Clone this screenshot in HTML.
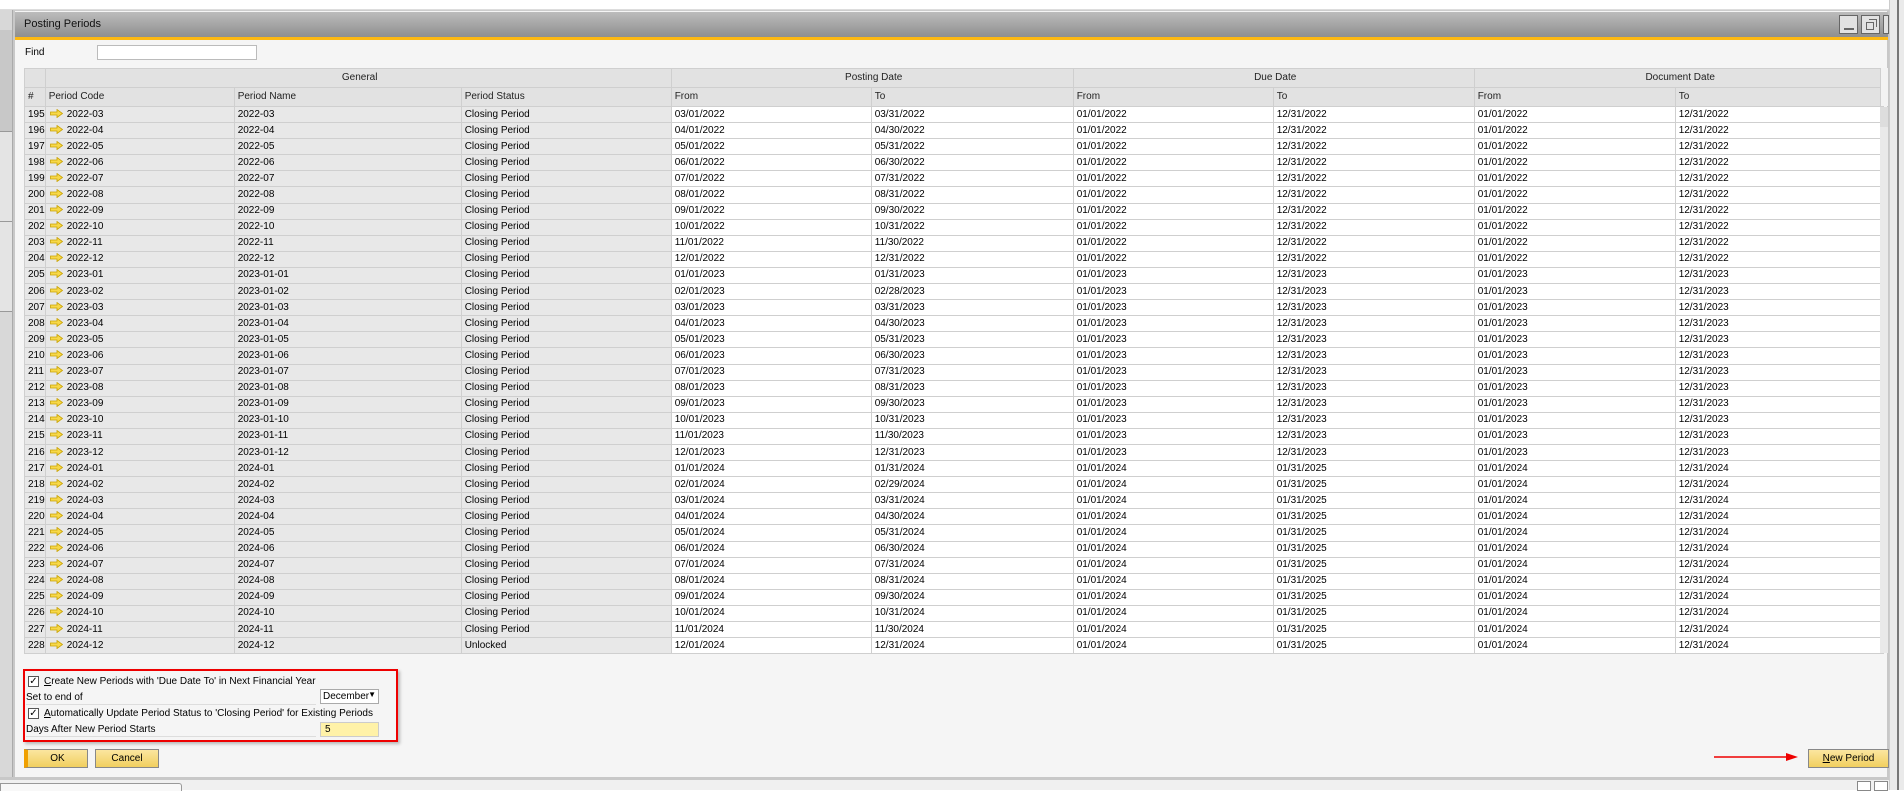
<!DOCTYPE html>
<html><head><meta charset="utf-8"><style>
*{box-sizing:border-box;margin:0;padding:0}
body{width:1904px;height:790px;overflow:hidden;background:#fff;font-family:"Liberation Sans",sans-serif;font-size:10px;color:#000;position:relative}
.abs{position:absolute}
#side{left:0;top:10px;width:13px;height:770px;background:#d8d8d8;border-right:1px solid #aaa}
.tab{position:absolute;left:0;width:12px;background:#e4e4e4;border-bottom:1px solid #999}
#win{left:13px;top:10px;width:1876px;height:770px;background:#f5f5f5;border:2px solid #c8c8c8;border-top:1px solid #ccc}
#title{left:15px;top:12px;width:1873px;height:25px;background:linear-gradient(#bcbcbc,#8f8f8f);color:#111;font-size:11px;padding:6px 0 0 9px}
#orange{left:15px;top:37px;width:1873px;height:3px;background:#fdb913}
.wb{top:15px;width:19px;height:19px;border:1px solid #666;background:#e2e2e2}
#rstrip{left:1889px;top:0;width:15px;height:790px;background:#eaeaea;border-left:1px solid #ccc}
#rstrip:after{content:"";position:absolute;left:7px;top:0;width:2px;height:790px;background:#777}
table{position:absolute;left:24px;top:68px;border-collapse:collapse;table-layout:fixed}
td,th{height:16.1px;border:1px solid #cfcfcf;padding:0 0 0 3px;white-space:nowrap;overflow:hidden;font-weight:normal;text-align:left;line-height:14px}
th{background:#e2e2e2;height:19px;color:#222}
th.c{text-align:center}
td.g{background:#e8e8e8}
td.w{background:#fff}
.ar{display:inline-block;width:13px;height:9px;vertical-align:-1px;margin:0 4px 0 1px}
.cb{width:11px;height:11px;border:1px solid #555;background:#fff;font-size:10px;line-height:9px;text-align:center}
.btn{height:19px;border:1px solid #888;background:linear-gradient(#fbe6a0,#f1cf5f);text-align:center;line-height:17px;font-size:10px}
</style></head><body>
<div class="abs" style="left:0;top:0;width:1904px;height:10px;background:#fff;border-bottom:1px solid #ddd"></div>
<div id="side" class="abs">
<div class="tab" style="top:20px;height:102px;background:#c8c8c8"></div>
<div class="tab" style="top:122px;height:90px"></div>
<div class="tab" style="top:212px;height:90px"></div>
</div>
<div id="win" class="abs"></div>
<div id="title" class="abs">Posting Periods</div>
<div id="orange" class="abs"></div>
<div class="abs wb" style="left:1839px"><div class="abs" style="left:4px;top:12px;width:10px;height:2px;background:#666"></div></div>
<div class="abs wb" style="left:1861px"><div class="abs" style="left:4px;top:6px;width:8px;height:8px;border:1px solid #666"></div><div class="abs" style="left:7px;top:3px;width:8px;height:8px;border-top:1px solid #666;border-right:1px solid #666"></div></div>
<div class="abs wb" style="left:1883px;width:6px"></div>
<div id="rstrip" class="abs"></div>
<div class="abs" style="left:25px;top:47px">Find</div>
<div class="abs" style="left:97px;top:45px;width:160px;height:15px;background:#fff;border:1px solid #bbb"></div>
<svg width="0" height="0" style="position:absolute"><defs><symbol id="a" viewBox="0 0 13 9"><path d="M0.5 3H7V0.5L12.5 4.5L7 8.5V6H0.5Z" fill="#f7d84a" stroke="#c9a200" stroke-width="0.8"/></symbol></defs></svg>
<table>
<colgroup><col style="width:18px"><col style="width:189px"><col style="width:227px"><col style="width:210px"><col style="width:200px"><col style="width:202px"><col style="width:200px"><col style="width:201px"><col style="width:201px"><col style="width:208px"></colgroup>
<tr><th></th><th class="c" colspan="3">General</th><th class="c" colspan="2">Posting Date</th><th class="c" colspan="2">Due Date</th><th class="c" colspan="2">Document Date</th></tr>
<tr><th>#</th><th>Period Code</th><th>Period Name</th><th>Period Status</th><th>From</th><th>To</th><th>From</th><th>To</th><th>From</th><th>To</th></tr>
<tr><td class="g">195</td><td class="g"><svg class="ar"><use href="#a"/></svg>2022-03</td><td class="g">2022-03</td><td class="g">Closing Period</td><td class="w">03/01/2022</td><td class="w">03/31/2022</td><td class="w">01/01/2022</td><td class="w">12/31/2022</td><td class="w">01/01/2022</td><td class="w">12/31/2022</td></tr>
<tr><td class="g">196</td><td class="g"><svg class="ar"><use href="#a"/></svg>2022-04</td><td class="g">2022-04</td><td class="g">Closing Period</td><td class="w">04/01/2022</td><td class="w">04/30/2022</td><td class="w">01/01/2022</td><td class="w">12/31/2022</td><td class="w">01/01/2022</td><td class="w">12/31/2022</td></tr>
<tr><td class="g">197</td><td class="g"><svg class="ar"><use href="#a"/></svg>2022-05</td><td class="g">2022-05</td><td class="g">Closing Period</td><td class="w">05/01/2022</td><td class="w">05/31/2022</td><td class="w">01/01/2022</td><td class="w">12/31/2022</td><td class="w">01/01/2022</td><td class="w">12/31/2022</td></tr>
<tr><td class="g">198</td><td class="g"><svg class="ar"><use href="#a"/></svg>2022-06</td><td class="g">2022-06</td><td class="g">Closing Period</td><td class="w">06/01/2022</td><td class="w">06/30/2022</td><td class="w">01/01/2022</td><td class="w">12/31/2022</td><td class="w">01/01/2022</td><td class="w">12/31/2022</td></tr>
<tr><td class="g">199</td><td class="g"><svg class="ar"><use href="#a"/></svg>2022-07</td><td class="g">2022-07</td><td class="g">Closing Period</td><td class="w">07/01/2022</td><td class="w">07/31/2022</td><td class="w">01/01/2022</td><td class="w">12/31/2022</td><td class="w">01/01/2022</td><td class="w">12/31/2022</td></tr>
<tr><td class="g">200</td><td class="g"><svg class="ar"><use href="#a"/></svg>2022-08</td><td class="g">2022-08</td><td class="g">Closing Period</td><td class="w">08/01/2022</td><td class="w">08/31/2022</td><td class="w">01/01/2022</td><td class="w">12/31/2022</td><td class="w">01/01/2022</td><td class="w">12/31/2022</td></tr>
<tr><td class="g">201</td><td class="g"><svg class="ar"><use href="#a"/></svg>2022-09</td><td class="g">2022-09</td><td class="g">Closing Period</td><td class="w">09/01/2022</td><td class="w">09/30/2022</td><td class="w">01/01/2022</td><td class="w">12/31/2022</td><td class="w">01/01/2022</td><td class="w">12/31/2022</td></tr>
<tr><td class="g">202</td><td class="g"><svg class="ar"><use href="#a"/></svg>2022-10</td><td class="g">2022-10</td><td class="g">Closing Period</td><td class="w">10/01/2022</td><td class="w">10/31/2022</td><td class="w">01/01/2022</td><td class="w">12/31/2022</td><td class="w">01/01/2022</td><td class="w">12/31/2022</td></tr>
<tr><td class="g">203</td><td class="g"><svg class="ar"><use href="#a"/></svg>2022-11</td><td class="g">2022-11</td><td class="g">Closing Period</td><td class="w">11/01/2022</td><td class="w">11/30/2022</td><td class="w">01/01/2022</td><td class="w">12/31/2022</td><td class="w">01/01/2022</td><td class="w">12/31/2022</td></tr>
<tr><td class="g">204</td><td class="g"><svg class="ar"><use href="#a"/></svg>2022-12</td><td class="g">2022-12</td><td class="g">Closing Period</td><td class="w">12/01/2022</td><td class="w">12/31/2022</td><td class="w">01/01/2022</td><td class="w">12/31/2022</td><td class="w">01/01/2022</td><td class="w">12/31/2022</td></tr>
<tr><td class="g">205</td><td class="g"><svg class="ar"><use href="#a"/></svg>2023-01</td><td class="g">2023-01-01</td><td class="g">Closing Period</td><td class="w">01/01/2023</td><td class="w">01/31/2023</td><td class="w">01/01/2023</td><td class="w">12/31/2023</td><td class="w">01/01/2023</td><td class="w">12/31/2023</td></tr>
<tr><td class="g">206</td><td class="g"><svg class="ar"><use href="#a"/></svg>2023-02</td><td class="g">2023-01-02</td><td class="g">Closing Period</td><td class="w">02/01/2023</td><td class="w">02/28/2023</td><td class="w">01/01/2023</td><td class="w">12/31/2023</td><td class="w">01/01/2023</td><td class="w">12/31/2023</td></tr>
<tr><td class="g">207</td><td class="g"><svg class="ar"><use href="#a"/></svg>2023-03</td><td class="g">2023-01-03</td><td class="g">Closing Period</td><td class="w">03/01/2023</td><td class="w">03/31/2023</td><td class="w">01/01/2023</td><td class="w">12/31/2023</td><td class="w">01/01/2023</td><td class="w">12/31/2023</td></tr>
<tr><td class="g">208</td><td class="g"><svg class="ar"><use href="#a"/></svg>2023-04</td><td class="g">2023-01-04</td><td class="g">Closing Period</td><td class="w">04/01/2023</td><td class="w">04/30/2023</td><td class="w">01/01/2023</td><td class="w">12/31/2023</td><td class="w">01/01/2023</td><td class="w">12/31/2023</td></tr>
<tr><td class="g">209</td><td class="g"><svg class="ar"><use href="#a"/></svg>2023-05</td><td class="g">2023-01-05</td><td class="g">Closing Period</td><td class="w">05/01/2023</td><td class="w">05/31/2023</td><td class="w">01/01/2023</td><td class="w">12/31/2023</td><td class="w">01/01/2023</td><td class="w">12/31/2023</td></tr>
<tr><td class="g">210</td><td class="g"><svg class="ar"><use href="#a"/></svg>2023-06</td><td class="g">2023-01-06</td><td class="g">Closing Period</td><td class="w">06/01/2023</td><td class="w">06/30/2023</td><td class="w">01/01/2023</td><td class="w">12/31/2023</td><td class="w">01/01/2023</td><td class="w">12/31/2023</td></tr>
<tr><td class="g">211</td><td class="g"><svg class="ar"><use href="#a"/></svg>2023-07</td><td class="g">2023-01-07</td><td class="g">Closing Period</td><td class="w">07/01/2023</td><td class="w">07/31/2023</td><td class="w">01/01/2023</td><td class="w">12/31/2023</td><td class="w">01/01/2023</td><td class="w">12/31/2023</td></tr>
<tr><td class="g">212</td><td class="g"><svg class="ar"><use href="#a"/></svg>2023-08</td><td class="g">2023-01-08</td><td class="g">Closing Period</td><td class="w">08/01/2023</td><td class="w">08/31/2023</td><td class="w">01/01/2023</td><td class="w">12/31/2023</td><td class="w">01/01/2023</td><td class="w">12/31/2023</td></tr>
<tr><td class="g">213</td><td class="g"><svg class="ar"><use href="#a"/></svg>2023-09</td><td class="g">2023-01-09</td><td class="g">Closing Period</td><td class="w">09/01/2023</td><td class="w">09/30/2023</td><td class="w">01/01/2023</td><td class="w">12/31/2023</td><td class="w">01/01/2023</td><td class="w">12/31/2023</td></tr>
<tr><td class="g">214</td><td class="g"><svg class="ar"><use href="#a"/></svg>2023-10</td><td class="g">2023-01-10</td><td class="g">Closing Period</td><td class="w">10/01/2023</td><td class="w">10/31/2023</td><td class="w">01/01/2023</td><td class="w">12/31/2023</td><td class="w">01/01/2023</td><td class="w">12/31/2023</td></tr>
<tr><td class="g">215</td><td class="g"><svg class="ar"><use href="#a"/></svg>2023-11</td><td class="g">2023-01-11</td><td class="g">Closing Period</td><td class="w">11/01/2023</td><td class="w">11/30/2023</td><td class="w">01/01/2023</td><td class="w">12/31/2023</td><td class="w">01/01/2023</td><td class="w">12/31/2023</td></tr>
<tr><td class="g">216</td><td class="g"><svg class="ar"><use href="#a"/></svg>2023-12</td><td class="g">2023-01-12</td><td class="g">Closing Period</td><td class="w">12/01/2023</td><td class="w">12/31/2023</td><td class="w">01/01/2023</td><td class="w">12/31/2023</td><td class="w">01/01/2023</td><td class="w">12/31/2023</td></tr>
<tr><td class="g">217</td><td class="g"><svg class="ar"><use href="#a"/></svg>2024-01</td><td class="g">2024-01</td><td class="g">Closing Period</td><td class="w">01/01/2024</td><td class="w">01/31/2024</td><td class="w">01/01/2024</td><td class="w">01/31/2025</td><td class="w">01/01/2024</td><td class="w">12/31/2024</td></tr>
<tr><td class="g">218</td><td class="g"><svg class="ar"><use href="#a"/></svg>2024-02</td><td class="g">2024-02</td><td class="g">Closing Period</td><td class="w">02/01/2024</td><td class="w">02/29/2024</td><td class="w">01/01/2024</td><td class="w">01/31/2025</td><td class="w">01/01/2024</td><td class="w">12/31/2024</td></tr>
<tr><td class="g">219</td><td class="g"><svg class="ar"><use href="#a"/></svg>2024-03</td><td class="g">2024-03</td><td class="g">Closing Period</td><td class="w">03/01/2024</td><td class="w">03/31/2024</td><td class="w">01/01/2024</td><td class="w">01/31/2025</td><td class="w">01/01/2024</td><td class="w">12/31/2024</td></tr>
<tr><td class="g">220</td><td class="g"><svg class="ar"><use href="#a"/></svg>2024-04</td><td class="g">2024-04</td><td class="g">Closing Period</td><td class="w">04/01/2024</td><td class="w">04/30/2024</td><td class="w">01/01/2024</td><td class="w">01/31/2025</td><td class="w">01/01/2024</td><td class="w">12/31/2024</td></tr>
<tr><td class="g">221</td><td class="g"><svg class="ar"><use href="#a"/></svg>2024-05</td><td class="g">2024-05</td><td class="g">Closing Period</td><td class="w">05/01/2024</td><td class="w">05/31/2024</td><td class="w">01/01/2024</td><td class="w">01/31/2025</td><td class="w">01/01/2024</td><td class="w">12/31/2024</td></tr>
<tr><td class="g">222</td><td class="g"><svg class="ar"><use href="#a"/></svg>2024-06</td><td class="g">2024-06</td><td class="g">Closing Period</td><td class="w">06/01/2024</td><td class="w">06/30/2024</td><td class="w">01/01/2024</td><td class="w">01/31/2025</td><td class="w">01/01/2024</td><td class="w">12/31/2024</td></tr>
<tr><td class="g">223</td><td class="g"><svg class="ar"><use href="#a"/></svg>2024-07</td><td class="g">2024-07</td><td class="g">Closing Period</td><td class="w">07/01/2024</td><td class="w">07/31/2024</td><td class="w">01/01/2024</td><td class="w">01/31/2025</td><td class="w">01/01/2024</td><td class="w">12/31/2024</td></tr>
<tr><td class="g">224</td><td class="g"><svg class="ar"><use href="#a"/></svg>2024-08</td><td class="g">2024-08</td><td class="g">Closing Period</td><td class="w">08/01/2024</td><td class="w">08/31/2024</td><td class="w">01/01/2024</td><td class="w">01/31/2025</td><td class="w">01/01/2024</td><td class="w">12/31/2024</td></tr>
<tr><td class="g">225</td><td class="g"><svg class="ar"><use href="#a"/></svg>2024-09</td><td class="g">2024-09</td><td class="g">Closing Period</td><td class="w">09/01/2024</td><td class="w">09/30/2024</td><td class="w">01/01/2024</td><td class="w">01/31/2025</td><td class="w">01/01/2024</td><td class="w">12/31/2024</td></tr>
<tr><td class="g">226</td><td class="g"><svg class="ar"><use href="#a"/></svg>2024-10</td><td class="g">2024-10</td><td class="g">Closing Period</td><td class="w">10/01/2024</td><td class="w">10/31/2024</td><td class="w">01/01/2024</td><td class="w">01/31/2025</td><td class="w">01/01/2024</td><td class="w">12/31/2024</td></tr>
<tr><td class="g">227</td><td class="g"><svg class="ar"><use href="#a"/></svg>2024-11</td><td class="g">2024-11</td><td class="g">Closing Period</td><td class="w">11/01/2024</td><td class="w">11/30/2024</td><td class="w">01/01/2024</td><td class="w">01/31/2025</td><td class="w">01/01/2024</td><td class="w">12/31/2024</td></tr>
<tr><td class="g">228</td><td class="g"><svg class="ar"><use href="#a"/></svg>2024-12</td><td class="g">2024-12</td><td class="g">Unlocked</td><td class="w">12/01/2024</td><td class="w">12/31/2024</td><td class="w">01/01/2024</td><td class="w">01/31/2025</td><td class="w">01/01/2024</td><td class="w">12/31/2024</td></tr>
</table>
<div class="abs" style="left:1880px;top:68px;width:8px;height:38px;background:#f3f3f3;border-left:1px solid #cfcfcf"></div>
<div class="abs" style="left:1880px;top:107px;width:8px;height:546px;background:#e9e9e9"></div>
<div class="abs" style="left:1880px;top:107px;width:8px;height:20px;background:#ddd"></div>
<div class="abs" style="left:23px;top:669px;width:375px;height:73px;border:2px solid #e00;box-shadow:2px 2px 3px rgba(0,0,0,.25)"></div>
<div class="abs cb" style="left:28px;top:676px">✓</div>
<div class="abs" style="left:44px;top:676px"><u>C</u>reate New Periods with 'Due Date To' in Next Financial Year</div>
<div class="abs" style="left:26px;top:692px">Set to end of</div>
<div class="abs" style="left:26px;top:704px;width:290px;height:1px;background:#ddd"></div>
<div class="abs" style="left:320px;top:689px;width:59px;height:15px;background:#fff;border:1px solid #aaa;padding:1px 0 0 2px">December<span style="position:absolute;right:2px;top:0;font-size:8px">▼</span></div>
<div class="abs cb" style="left:28px;top:708px">✓</div>
<div class="abs" style="left:44px;top:708px"><u>A</u>utomatically Update Period Status to 'Closing Period' for Existing Periods</div>
<div class="abs" style="left:26px;top:724px">Days After New Period Starts</div>
<div class="abs" style="left:26px;top:736px;width:290px;height:1px;background:#ddd"></div>
<div class="abs" style="left:320px;top:722px;width:59px;height:15px;background:#fff2a8;border:1px solid #ccc;padding:1px 0 0 4px">5</div>
<div class="abs btn" style="left:24px;top:749px;width:64px;border-left:4px solid #f0a000">OK</div>
<div class="abs btn" style="left:95px;top:749px;width:64px">Cancel</div>
<div class="abs btn" style="left:1808px;top:749px;width:81px"><u>N</u>ew Period</div>
<svg class="abs" style="left:1712px;top:750px" width="90" height="14"><line x1="2" y1="7" x2="76" y2="7" stroke="#e00" stroke-width="1.5"/><path d="M74 3L86 7L74 11Z" fill="#e00"/></svg>
<div class="abs" style="left:0;top:777px;width:1889px;height:3px;background:#c8c8c8"></div>
<div class="abs" style="left:0;top:780px;width:1889px;height:10px;background:#f0f0f0"></div>
<div class="abs" style="left:0;top:783px;width:182px;height:8px;background:#f8f8f8;border:1px solid #999;border-bottom:none;border-radius:0 3px 0 0"></div>
<div class="abs" style="left:1857px;top:781px;width:14px;height:10px;border:1px solid #888;background:#fff"></div>
<div class="abs" style="left:1874px;top:781px;width:14px;height:10px;border:1px solid #888;background:#fff"></div>
</body></html>
